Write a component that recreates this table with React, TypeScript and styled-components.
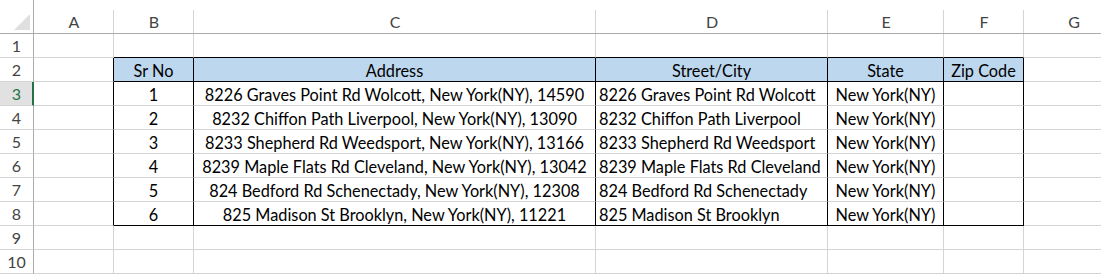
import React from "react";
import styled, { createGlobalStyle } from "styled-components";

const GlobalStyle = createGlobalStyle`
  html, body {
    margin: 0;
    padding: 0;
    background: #ffffff;
    overflow: hidden;
  }
  body {
    font-family: "Lato", "Liberation Sans", sans-serif;
  }
`;

const columns = [
  { name: "A", width: 80 },
  { name: "B", width: 80 },
  { name: "C", width: 402 },
  { name: "D", width: 232 },
  { name: "E", width: 116 },
  { name: "F", width: 80 },
  { name: "G", width: 100 },
];

const records = [
  ["1", "8226 Graves Point Rd Wolcott, New York(NY), 14590", "8226 Graves Point Rd Wolcott", "New York(NY)"],
  ["2", "8232 Chiffon Path Liverpool, New York(NY), 13090", "8232 Chiffon Path Liverpool", "New York(NY)"],
  ["3", "8233 Shepherd Rd Weedsport, New York(NY), 13166", "8233 Shepherd Rd Weedsport", "New York(NY)"],
  ["4", "8239 Maple Flats Rd Cleveland, New York(NY), 13042", "8239 Maple Flats Rd Cleveland", "New York(NY)"],
  ["5", "824 Bedford Rd Schenectady, New York(NY), 12308", "824 Bedford Rd Schenectady", "New York(NY)"],
  ["6", "825 Madison St Brooklyn, New York(NY), 11221", "825 Madison St Brooklyn", "New York(NY)"],
];

const headings = ["Sr No", "Address", "Street/City", "State", "Zip Code"];
// data alignment per table column (headings are always centered)
const aligns: Array<"center" | "left"> = ["center", "center", "left", "center", "center"];

const Sheet = styled.div`
  display: grid;
  grid-template-columns: 34px ${columns.map((c) => `${c.width}px`).join(" ")};
  grid-template-rows: 34px repeat(10, 24px);
  width: max-content;
  color: #000000;
`;

const Corner = styled.div`
  position: relative;
  box-sizing: border-box;
  border-right: 1px solid #ababab;
  border-bottom: 1px solid #ababab;
  &::after {
    content: "";
    position: absolute;
    right: 3px;
    bottom: 3px;
    width: 0;
    height: 0;
    border-left: 16px solid transparent;
    border-bottom: 16px solid #dfdfdf;
  }
`;

const ColHead = styled.div`
  box-sizing: border-box;
  display: flex;
  align-items: center;
  justify-content: center;
  padding-top: 10px;
  border-bottom: 1px solid #ababab;
  background: linear-gradient(to bottom, transparent 10px, #d4d4d4 10px) right / 1px 100% no-repeat;
  font-size: 16px;
  color: #444444;
`;

const RowHead = styled.div<{ $active?: boolean }>`
  box-sizing: border-box;
  display: flex;
  align-items: center;
  justify-content: center;
  border-bottom: 1px solid #d4d4d4;
  border-right: ${(p) => (p.$active ? "2px solid #217346" : "1px solid #ababab")};
  padding-left: ${(p) => (p.$active ? "1px" : "0")};
  background: ${(p) => (p.$active ? "#e1e1e1" : "#ffffff")};
  font-size: 16px;
  color: ${(p) => (p.$active ? "#217346" : "#444444")};
`;

const Cell = styled.div<{
  $align?: "left" | "center";
  $fill?: boolean;
  $edgeR?: boolean;
  $edgeB?: boolean;
}>`
  box-sizing: border-box;
  display: flex;
  align-items: center;
  justify-content: ${(p) => (p.$align === "left" ? "flex-start" : "center")};
  padding: 1px 3px 0 3px;
  white-space: nowrap;
  overflow: visible;
  font-size: 16.3px;
  background: ${(p) => (p.$fill ? "#bdd7ee" : "transparent")};
  border-right: 1px solid ${(p) => (p.$edgeR ? "#000000" : "#d4d4d4")};
  border-bottom: 1px solid ${(p) => (p.$edgeB ? "#000000" : "#d4d4d4")};
`;

// table occupies B2:F8 -> column index 1..5, rows 2..8
const cellContent = (row: number, col: number) => {
  if (col < 1 || col > 5) return "";
  if (row === 2) return headings[col - 1];
  if (row >= 3 && row <= 8) {
    const rec = records[row - 3];
    return col <= 4 ? rec[col - 1] : "";
  }
  return "";
};

const App = () => {
  const rows = Array.from({ length: 10 }, (_, i) => i + 1);
  return (
    <>
      <GlobalStyle />
      <Sheet>
        <Corner />
        {columns.map((c) => (
          <ColHead key={c.name}>{c.name}</ColHead>
        ))}
        {rows.map((r) => (
          <React.Fragment key={r}>
            <RowHead $active={r === 3}>{r}</RowHead>
            {columns.map((c, ci) => {
              const inTable = r >= 2 && r <= 8 && ci >= 1 && ci <= 5;
              const edgeR = r >= 2 && r <= 8 && ci >= 0 && ci <= 5;
              const edgeB = ci >= 1 && ci <= 5 && (r === 1 || r === 2 || r === 8);
              return (
                <Cell
                  key={c.name}
                  $align={inTable && r > 2 ? aligns[ci - 1] : "center"}
                  $fill={r === 2 && inTable}
                  $edgeR={edgeR}
                  $edgeB={edgeB}
                >
                  {cellContent(r, ci)}
                </Cell>
              );
            })}
          </React.Fragment>
        ))}
      </Sheet>
    </>
  );
};

export default App;
